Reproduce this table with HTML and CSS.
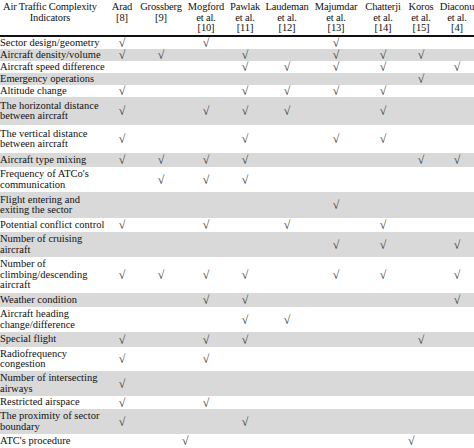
FILE: index.html
```html
<!DOCTYPE html>
<html>
<head>
<meta charset="utf-8">
<link rel="stylesheet" href="styles.css">
</head>
<body>
<div class="wrap">
<table class="tbl">
<colgroup>
<col class="c0"><col class="c1"><col class="c2"><col class="c3"><col class="c4"><col class="c5"><col class="c6"><col class="c7"><col class="c8"><col class="c9">
</colgroup>
<thead>
<tr>
<th class="first"><span class="h">Air Traffic Complexity<br>Indicators</span></th>
<th><span class="h">Arad<br>[8]</span></th>
<th><span class="h">Grossberg<br>[9]</span></th>
<th><span class="h">Mogford<br>et al.<br>[10]</span></th>
<th><span class="h">Pawlak<br>et al.<br>[11]</span></th>
<th><span class="h">Laudeman<br>et al.<br>[12]</span></th>
<th><span class="h">Majumdar<br>et al.<br>[13]</span></th>
<th><span class="h">Chatterji<br>et al.<br>[14]</span></th>
<th><span class="h">Koros<br>et al.<br>[15]</span></th>
<th><span class="h">Diaconu<br>et al.<br>[4]</span></th>
</tr>
</thead>
<tbody>
<tr class="h12"><td>Sector design/geometry</td><td>√</td><td></td><td>√</td><td></td><td></td><td>√</td><td></td><td></td><td></td></tr>
<tr class="h12 g"><td>Aircraft density/volume</td><td>√</td><td>√</td><td></td><td>√</td><td></td><td>√</td><td>√</td><td>√</td><td></td></tr>
<tr class="h12"><td>Aircraft speed difference</td><td></td><td></td><td></td><td>√</td><td>√</td><td>√</td><td>√</td><td></td><td>√</td></tr>
<tr class="h12 g"><td>Emergency operations</td><td></td><td></td><td></td><td></td><td></td><td></td><td></td><td>√</td><td></td></tr>
<tr class="h12"><td>Altitude change</td><td>√</td><td></td><td></td><td>√</td><td>√</td><td>√</td><td>√</td><td></td><td></td></tr>
<tr class="h28 g"><td>The horizontal distance<br>between aircraft</td><td>√</td><td></td><td>√</td><td>√</td><td>√</td><td></td><td>√</td><td></td><td></td></tr>
<tr class="h28"><td>The vertical distance<br>between aircraft</td><td>√</td><td></td><td></td><td>√</td><td></td><td>√</td><td>√</td><td></td><td></td></tr>
<tr class="h14 g"><td>Aircraft type mixing</td><td>√</td><td>√</td><td>√</td><td>√</td><td></td><td></td><td></td><td>√</td><td>√</td></tr>
<tr class="h25"><td>Frequency of ATCo's<br>communication</td><td></td><td>√</td><td>√</td><td>√</td><td></td><td></td><td></td><td></td><td></td></tr>
<tr class="h26 g"><td>Flight entering and<br>exiting the sector</td><td></td><td></td><td></td><td></td><td></td><td>√</td><td></td><td></td><td></td></tr>
<tr class="h14"><td>Potential conflict control</td><td>√</td><td></td><td>√</td><td></td><td>√</td><td></td><td>√</td><td></td><td></td></tr>
<tr class="h25 g"><td>Number of cruising<br>aircraft</td><td></td><td></td><td></td><td></td><td></td><td>√</td><td>√</td><td></td><td>√</td></tr>
<tr class="h36"><td>Number of<br>climbing/descending<br>aircraft</td><td>√</td><td>√</td><td>√</td><td>√</td><td></td><td>√</td><td>√</td><td></td><td>√</td></tr>
<tr class="h14 g"><td>Weather condition</td><td></td><td></td><td>√</td><td>√</td><td></td><td></td><td></td><td></td><td>√</td></tr>
<tr class="h25"><td>Aircraft heading<br>change/difference</td><td></td><td></td><td></td><td>√</td><td>√</td><td></td><td></td><td></td><td></td></tr>
<tr class="h15 g"><td>Special flight</td><td>√</td><td></td><td>√</td><td>√</td><td></td><td></td><td></td><td>√</td><td></td></tr>
<tr class="h24"><td>Radiofrequency<br>congestion</td><td>√</td><td></td><td>√</td><td></td><td></td><td></td><td></td><td></td><td></td></tr>
<tr class="h25 g"><td>Number of intersecting<br>airways</td><td>√</td><td></td><td></td><td></td><td></td><td></td><td></td><td></td><td></td></tr>
<tr class="h13"><td>Restricted airspace</td><td>√</td><td></td><td>√</td><td></td><td></td><td></td><td></td><td></td><td></td></tr>
<tr class="h25 g"><td>The proximity of sector<br>boundary</td><td>√</td><td></td><td></td><td>√</td><td></td><td></td><td></td><td></td><td></td></tr>
<tr class="h14"><td>ATC's procedure</td><td></td><td></td><td class="left">√</td><td></td><td></td><td></td><td></td><td class="left">√</td><td></td></tr>
</tbody>
</table>
</div>
</body>
</html>
```
FILE: styles.css
```css
html, body {
  margin: 0;
  padding: 0;
  background: #fff;
}
.wrap {
  width: 474px;
  height: 448px;
  overflow: hidden;
}
.tbl {
  table-layout: fixed;
  width: 480px;
  border-collapse: separate;
  border-spacing: 0;
  font-family: "Liberation Serif", "Times New Roman", serif;
  font-size: 10.5px;
  line-height: 10.5px;
  color: #111;
}
.c0 { width: 104px; }
.c1 { width: 36px; }
.c2 { width: 42px; }
.c3 { width: 48px; }
.c4 { width: 30px; }
.c5 { width: 54px; }
.c6 { width: 44px; }
.c7 { width: 50px; }
.c8 { width: 26px; }
.c9 { width: 46px; }
.tbl th {
  height: 33px;
  padding: 2px 0 0 0;
  vertical-align: top;
  font-weight: normal;
  text-align: center;
  border-bottom: 2px solid #111;
  white-space: nowrap;
}
.tbl th .h {
  display: block;
  margin: 0 -20px;
  text-align: center;
  letter-spacing: -0.15px;
}
.tbl th.first .h {
  margin: 0 0 0 -4px;
}
.tbl td {
  padding: 0;
  vertical-align: middle;
  text-align: center;
  white-space: nowrap;
  color: #333;
  font-size: 12px;
  line-height: 10px;
}
.tbl td:first-child {
  text-align: left;
  color: #111;
  font-size: 10.5px;
  line-height: 10.5px;
}
.tbl td.left {
  text-align: left;
}
.g td { background: #d9d9d9; }
.h12 td { height: 12px; }
.h13 td { height: 13px; }
.h14 td { height: 14px; }
.h15 td { height: 15px; }
.h24 td { height: 24px; }
.h25 td { height: 25px; }
.h26 td { height: 26px; }
.h28 td { height: 28px; }
.h36 td { height: 36px; }
```
